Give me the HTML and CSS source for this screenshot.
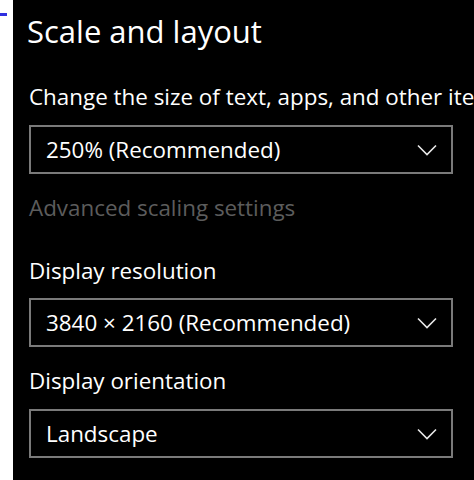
FILE: index.html
```html
<!DOCTYPE html>
<html lang="en">
<head>
<meta charset="utf-8">
<title>Scale and layout</title>
<link rel="stylesheet" href="styles.css">
</head>
<body>
<div class="page">
  <div class="strip"><div class="mark"></div></div>
  <main class="panel">
    <h1 class="title">Scale and layout</h1>
    <p class="label first">Change the size of text, apps, and other items</p>
    <div class="select gap-s">
      <span class="value">250% (Recommended)</span>
      <svg class="chev" width="20" height="12" viewBox="0 0 20 12"><polyline points="1,1.5 10,10.5 19,1.5" fill="none" stroke="#e8e8e8" stroke-width="1.6"/></svg>
    </div>
    <p class="label link-off after-box">Advanced scaling settings</p>
    <p class="label section">Display resolution</p>
    <div class="select gap-xs">
      <span class="value">3840 × 2160 (Recommended)</span>
      <svg class="chev" width="20" height="12" viewBox="0 0 20 12"><polyline points="1,1.5 10,10.5 19,1.5" fill="none" stroke="#e8e8e8" stroke-width="1.6"/></svg>
    </div>
    <p class="label after-box">Display orientation</p>
    <div class="select gap-s">
      <span class="value">Landscape</span>
      <svg class="chev" width="20" height="12" viewBox="0 0 20 12"><polyline points="1,1.5 10,10.5 19,1.5" fill="none" stroke="#e8e8e8" stroke-width="1.6"/></svg>
    </div>
  </main>
</div>
</body>
</html>
```
FILE: styles.css
```css
html, body {
  margin: 0;
  padding: 0;
  height: 100%;
  background: #000;
}
.page {
  display: flex;
  height: 100vh;
  overflow: hidden;
  font-family: "Open Sans", "Noto Sans", sans-serif;
}
.strip {
  width: 13px;
  flex: none;
  background: #fff;
  padding-top: 13px;
  box-sizing: border-box;
}
.mark {
  width: 7px;
  height: 3px;
  background: #2f2fe0;
}
.panel {
  flex: 1;
  min-width: 0;
  background: #000;
  color: #fff;
  padding: 10px 0 0 16px;
  overflow: hidden;
  white-space: nowrap;
}
.title {
  margin: 0 0 0 -2px;
  font-size: 31px;
  font-weight: 400;
  line-height: 42px;
}
.label {
  margin: 0;
  font-size: 22.4px;
  line-height: 30px;
}
.label.first { margin-top: 30px; }
.label.after-box { margin-top: 19px; }
.label.section { margin-top: 33px; }
.link-off { color: #5c5c5c; }
.select {
  box-sizing: border-box;
  width: 424px;
  height: 49px;
  border: 2px solid #7a7a7a;
  display: flex;
  align-items: center;
  justify-content: space-between;
  padding: 0 14px 0 15px;
}
.gap-s { margin-top: 13px; }
.gap-xs { margin-top: 12px; }
.value {
  font-size: 22.4px;
  line-height: 30px;
}
.chev { display: block; flex: none; }
```
